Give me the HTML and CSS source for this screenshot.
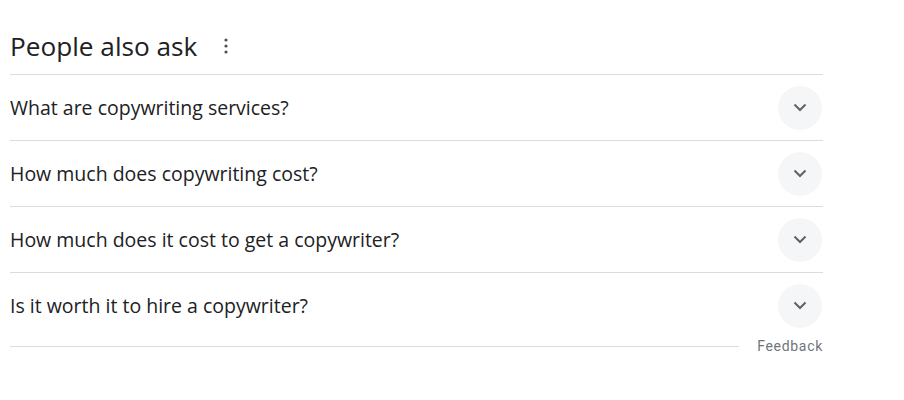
FILE: index.html
```
<!DOCTYPE html>
<html>
<head>
<meta charset="utf-8">
<link rel="stylesheet" href="styles.css">
</head>
<body>
<div class="paa">
  <div class="head">
    <h2 class="title">People also ask</h2>
    <span class="more">
      <svg width="4" height="16" viewBox="0 0 4 16"><circle cx="2" cy="2" r="1.6" fill="#4d5156"/><circle cx="2" cy="8" r="1.6" fill="#4d5156"/><circle cx="2" cy="14" r="1.6" fill="#4d5156"/></svg>
    </span>
  </div>
  <div class="list">
    <div class="row"><span class="q">What are copywriting services?</span><span class="btn"><svg width="14" height="9" viewBox="0 0 14 9"><path d="M1.5 1.5 L7 7 L12.5 1.5" fill="none" stroke="#5f6368" stroke-width="2"/></svg></span></div>
    <div class="row"><span class="q">How much does copywriting cost?</span><span class="btn"><svg width="14" height="9" viewBox="0 0 14 9"><path d="M1.5 1.5 L7 7 L12.5 1.5" fill="none" stroke="#5f6368" stroke-width="2"/></svg></span></div>
    <div class="row"><span class="q">How much does it cost to get a copywriter?</span><span class="btn"><svg width="14" height="9" viewBox="0 0 14 9"><path d="M1.5 1.5 L7 7 L12.5 1.5" fill="none" stroke="#5f6368" stroke-width="2"/></svg></span></div>
    <div class="row last"><span class="q">Is it worth it to hire a copywriter?</span><span class="btn"><svg width="14" height="9" viewBox="0 0 14 9"><path d="M1.5 1.5 L7 7 L12.5 1.5" fill="none" stroke="#5f6368" stroke-width="2"/></svg></span></div>
  </div>
  <div class="foot">
    <div class="line"></div>
    <span class="fb">Feedback</span>
  </div>
</div>
</body>
</html>
```
FILE: styles.css
```
body { margin: 0; background: #fff; font-family: "Open Sans", Roboto, "Liberation Sans", Arial, sans-serif; color: #202124; }
.paa { width: 813px; margin-left: 10px; padding-top: 28px; }
.head { display: flex; align-items: center; height: 36px; margin-bottom: 10px; }
.title { margin: 0; font-weight: 400; font-size: 26.2px; line-height: 36px; color: #202124; }
.more { display: flex; align-items: center; margin-left: 27px; }
.list { border-top: 1px solid #dadce0; }
.row { display: flex; align-items: center; justify-content: space-between; height: 65px; border-bottom: 1px solid #dadce0; }
.row.last { border-bottom: none; }
.q { font-size: 19.5px; color: #202124; padding-bottom: 1px; }
.btn { width: 44px; height: 44px; border-radius: 50%; background: #f5f6f8; display: flex; align-items: center; justify-content: center; margin-right: 1px; }
.foot { display: flex; align-items: center; height: 16px; margin-top: 0; }
.line { flex: 1; border-top: 1px solid #dadce0; margin-right: 18px; }
.fb { font-family: Roboto, "Liberation Sans", Arial, sans-serif; font-size: 14px; color: #70757a; letter-spacing: 0.7px; }
```
